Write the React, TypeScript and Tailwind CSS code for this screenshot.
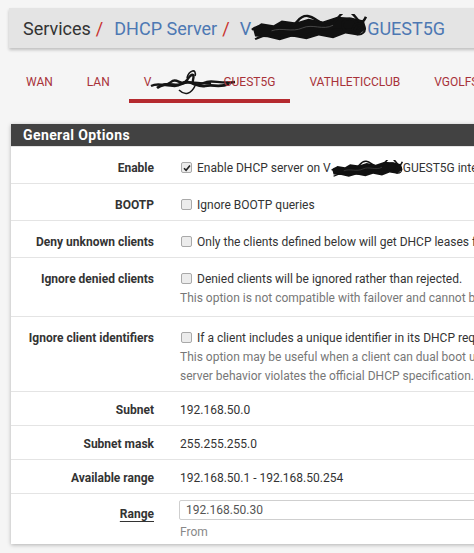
import React from "react"

function Blob({ w, h }: { w: number; h: number }) {
  return (
    <svg width={w} height={h} viewBox="0 0 113 30" preserveAspectRatio="none" className="inline-block align-middle -my-[12px]">
      <path
        d="M2 16 L10 10 L22 12 L30 7 L44 9 L56 5 L70 8 L84 3 L98 4 L110 7 L112 16 L104 23 L92 21 L80 26 L66 23 L54 27 L40 24 L28 28 L16 25 L4 24 Z"
        fill="#111"
      />
      <path d="M1 17 C14 4 30 28 45 8 S70 27 85 4 S104 23 112 3" stroke="#111" strokeWidth="2.5" fill="none" />
      <path d="M4 27 C24 15 40 30 60 20 S94 23 111 12" stroke="#111" strokeWidth="2" fill="none" />
      <circle cx="96" cy="12" r="7" stroke="#111" strokeWidth="2.5" fill="none" />
      <circle cx="105" cy="16" r="6" stroke="#111" strokeWidth="2" fill="none" />
      <path d="M20 18 C30 14 40 20 50 15 S70 18 80 12" stroke="#555" strokeWidth="0.8" fill="none" />
    </svg>
  )
}

function TabScribble() {
  return (
    <svg width="72" height="26" viewBox="0 0 72 26" className="inline-block align-middle -my-[10px] overflow-visible">
      <path d="M0 16 C8 12 14 18 20 12 C26 6 30 18 36 10 C40 4 44 2 42 10 C40 18 50 14 56 12 C62 10 70 14 84 12" stroke="#151515" strokeWidth="2.4" fill="none" />
      <path d="M6 18 C16 10 22 20 30 14 C38 8 46 18 54 16 C62 14 68 18 78 14" stroke="#151515" strokeWidth="2.8" fill="none" />
      <path d="M12 15 C20 12 26 17 34 13 C42 10 50 15 60 13" stroke="#151515" strokeWidth="2" fill="none" />
      <path d="M28 20 C34 26 40 24 44 16" stroke="#151515" strokeWidth="1.6" fill="none" />
      <path d="M36 8 C38 0 46 -2 44 6" stroke="#151515" strokeWidth="1.6" fill="none" />
    </svg>
  )
}

function Check({ on }: { on?: boolean }) {
  return (
    <span className="inline-flex w-[11px] h-[11px] ml-[1px] mr-[5px] items-center justify-center rounded-[2px] border border-[#a9a9a9] bg-[#ececec] align-middle -mt-[2px]">
      {on && (
        <svg width="8" height="8" viewBox="0 0 8 8">
          <path d="M1 4.2 L3.1 6.3 L7 1.5" stroke="#222" strokeWidth="1.6" fill="none" />
        </svg>
      )}
    </span>
  )
}

function Row({ label, children, tall }: { label: React.ReactNode; children: React.ReactNode; tall?: boolean }) {
  return (
    <div className={`flex border-t border-[#e4e4e4] ${tall ? "pt-[11px] pb-[5px]" : "pt-[8px] pb-[5px]"}`}>
      <div className="w-[143px] shrink-0 text-right font-bold text-[#333] leading-[20px]">{label}</div>
      <div className="pl-[26px] leading-[20px] text-[#333]">{children}</div>
    </div>
  )
}

export default function App() {
  const tabs = ["WAN", "LAN", "active", "VATHLETICCLUB", "VGOLFSIDE"]
  return (
    <div className="w-[474px] h-[553px] overflow-hidden bg-[#f5f5f5] font-['Roboto',sans-serif] text-[12px]">
      <div className="w-[640px] pl-[11px] pt-[8px]">
        <div className="-ml-[2px] h-[40px] bg-[#e4e4e4] shadow-[0_2px_3px_rgba(0,0,0,0.22)] flex items-center pl-[14px] text-[18px] whitespace-nowrap">
          <span className="text-[#333]">Services</span>
          <span className="text-[#c9302c] ml-[5px] mr-[11px]">/</span>
          <span className="text-[#4d78b3]">DHCP Server</span>
          <span className="text-[#c9302c] ml-[5px] mr-[10px]">/</span>
          <span className="text-[#4d78b3]">V</span>
          <Blob w={116} h={28} />
          <span className="text-[#4d78b3]">GUEST5G</span>
        </div>

        <div className="flex gap-[4px] mt-[24px] whitespace-nowrap">
          {tabs.map((t) => (
            <div
              key={t}
              className={`px-[15px] pb-[7px] leading-[20px] text-[#a83239] border-b-[4px] ${t === "active" ? "border-[#b52a2f]" : "border-transparent"}`}
            >
              {t === "active" ? (
                <>
                  V<TabScribble />GUEST5G
                </>
              ) : (
                t
              )}
            </div>
          ))}
        </div>

        <div className="mt-[21px] bg-white shadow-[0_1px_4px_rgba(0,0,0,0.28)] whitespace-nowrap">
          <div className="h-[23px] bg-[#424242] text-white font-bold text-[14px] leading-[23px] pl-[12px] tracking-[0.4px]">
            General Options
          </div>
          <div className="-mt-px">
            <Row label="Enable" tall>
              <Check on />
              Enable DHCP server on V
              <Blob w={72} h={18} />
              GUEST5G interface
            </Row>
            <Row label="BOOTP" tall>
              <Check />
              Ignore BOOTP queries
            </Row>
            <Row label="Deny unknown clients" tall>
              <Check />
              Only the clients defined below will get DHCP leases from this server.
            </Row>
            <Row label="Ignore denied clients" tall>
              <div>
                <Check />
                Denied clients will be ignored rather than rejected.
              </div>
              <div className="text-[#777] leading-[19px] mb-[3px]">
                This option is not compatible with failover and cannot be enabled when a Failover Peer IP address is configured.
              </div>
            </Row>
            <Row label="Ignore client identifiers" tall>
              <div>
                <Check />
                If a client includes a unique identifier in its DHCP request, that UID will not be recorded in its lease.
              </div>
              <div className="text-[#777] leading-[19px]">
                This option may be useful when a client can dual boot using different client identifiers but the same hardware (MAC) address.
              </div>
              <div className="text-[#777] leading-[19px]">
                server behavior violates the official DHCP specification.
              </div>
            </Row>
            <Row label="Subnet">192.168.50.0</Row>
            <Row label="Subnet mask">255.255.255.0</Row>
            <Row label="Available range">192.168.50.1 - 192.168.50.254</Row>
            <div className="flex border-t border-[#e4e4e4] pt-[6px] pb-[2px]">
              <div className="w-[143px] shrink-0 text-right font-bold text-[#333] leading-[20px] pt-[4px]">
                <span className="underline underline-offset-[3px] decoration-[#333]">Range</span>
              </div>
              <div className="pl-[25px] flex-1">
                <input
                  readOnly
                  value="192.168.50.30"
                  className="block w-full h-[20px] border border-[#cfcfcf] rounded-[2px] px-[6px] text-[12px] text-[#555] font-['Roboto',sans-serif] outline-none bg-white"
                />
                <div className="text-[#888] leading-[20px] mt-[2px] pl-[1px]">From</div>
              </div>
            </div>
          </div>
        </div>
      </div>
    </div>
  )
}
